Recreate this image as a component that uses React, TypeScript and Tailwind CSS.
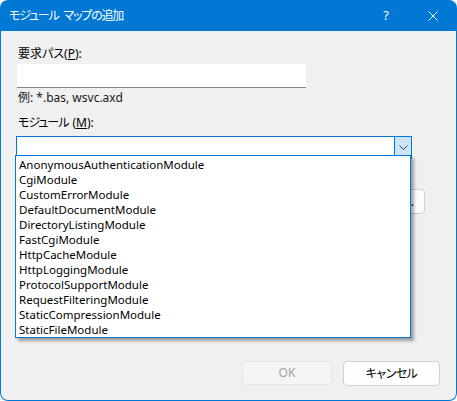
import React from 'react';

const MODULES = [
  'AnonymousAuthenticationModule',
  'CgiModule',
  'CustomErrorModule',
  'DefaultDocumentModule',
  'DirectoryListingModule',
  'FastCgiModule',
  'HttpCacheModule',
  'HttpLoggingModule',
  'ProtocolSupportModule',
  'RequestFilteringModule',
  'StaticCompressionModule',
  'StaticFileModule',
];

const FONT = "font-['Segoe_UI','Noto_Sans','Noto_Sans_CJK_JP',sans-serif] [font-feature-settings:'palt']";

export default function App() {
  return (
    <div className={`w-[457px] h-[401px] bg-[#0078d4] rounded-[8px] flex flex-col text-[12px] text-black ${FONT}`}>
      {/* タイトルバー */}
      <div className="h-[31px] flex items-center pl-[9px] text-white shrink-0">
        <span className="flex-1 tracking-[-1.2px]">
          モジュール<span className="inline-block w-[5px]" />マップの追加
        </span>
        <span className="w-[20px] text-center text-[13px] mr-[32px]">?</span>
        <svg width="10" height="10" viewBox="0 0 10 10" className="mr-[19px]">
          <path d="M0.5 0.5 L9.5 9.5 M9.5 0.5 L0.5 9.5" stroke="white" strokeWidth="1" />
        </svg>
      </div>

      <div className="relative flex-1 mx-[1px] mb-[1px] bg-[#f0f0f0] rounded-b-[7px] flex flex-col px-[15px] pt-[14px] pb-[14px]">
        <div className="pl-[2px] leading-[18px]">
          要求パス(<span className="underline">P</span>):
        </div>
        <div className="mt-[1px] ml-[1px] w-[289px] h-[24px] bg-white border-b border-[#868686]" />
        <div className="pl-[2px] leading-[17px] mt-[1px] text-[#1a1a1a]">例: *.bas, wsvc.axd</div>
        <div className="pl-[2px] leading-[18px] mt-[8px]">
          <span className="tracking-[-1px]">モジュール</span>
          <span className="inline-block w-[4px]" />(<span className="underline">M</span>):
        </div>
        <div className="mt-[4px] w-[396px] h-[23px] bg-white border border-[#0078d4] flex justify-end">
          <div className="w-[17px] h-full bg-[#cce4f7] border-l border-[#0078d4] flex items-center justify-center">
            <svg width="9" height="5" viewBox="0 0 9 5">
              <path d="M0.5 0.5 L4.5 4.5 L8.5 0.5" stroke="#444" strokeWidth="1" fill="none" />
            </svg>
          </div>
        </div>

        <div className="flex justify-end mt-[30px] pr-[16px]">
          <button className="w-[96px] h-[25px] bg-[#fdfdfd] border border-[#d0d0d0] rounded-[4px] text-right pr-[10px]">
            要求の制限...
          </button>
        </div>

        <div className="flex-1" />
        <div className="flex justify-end gap-[11px] pr-[1px]">
          <button disabled className="w-[90px] h-[24px] bg-[#f5f5f5] border border-[#e5e5e5] rounded-[4px] text-[#a0a0a0]">
            OK
          </button>
          <button className="w-[97px] h-[25px] bg-[#fdfdfd] border border-[#d0d0d0] rounded-[4px] tracking-[-0.5px]">
            キャンセル
          </button>
        </div>

        {/* ドロップダウン一覧 */}
        <div className="absolute left-[14px] top-[124px] w-[396px] h-[183px] bg-white border border-[#0078d4] shadow-[3px_3px_3px_rgba(0,0,0,0.35)] pt-[1px] pl-[3px] text-[11.5px]">
          {MODULES.map((m) => (
            <div key={m} className="h-[15px] leading-[15px] whitespace-nowrap">
              {m}
            </div>
          ))}
        </div>
      </div>
    </div>
  );
}
